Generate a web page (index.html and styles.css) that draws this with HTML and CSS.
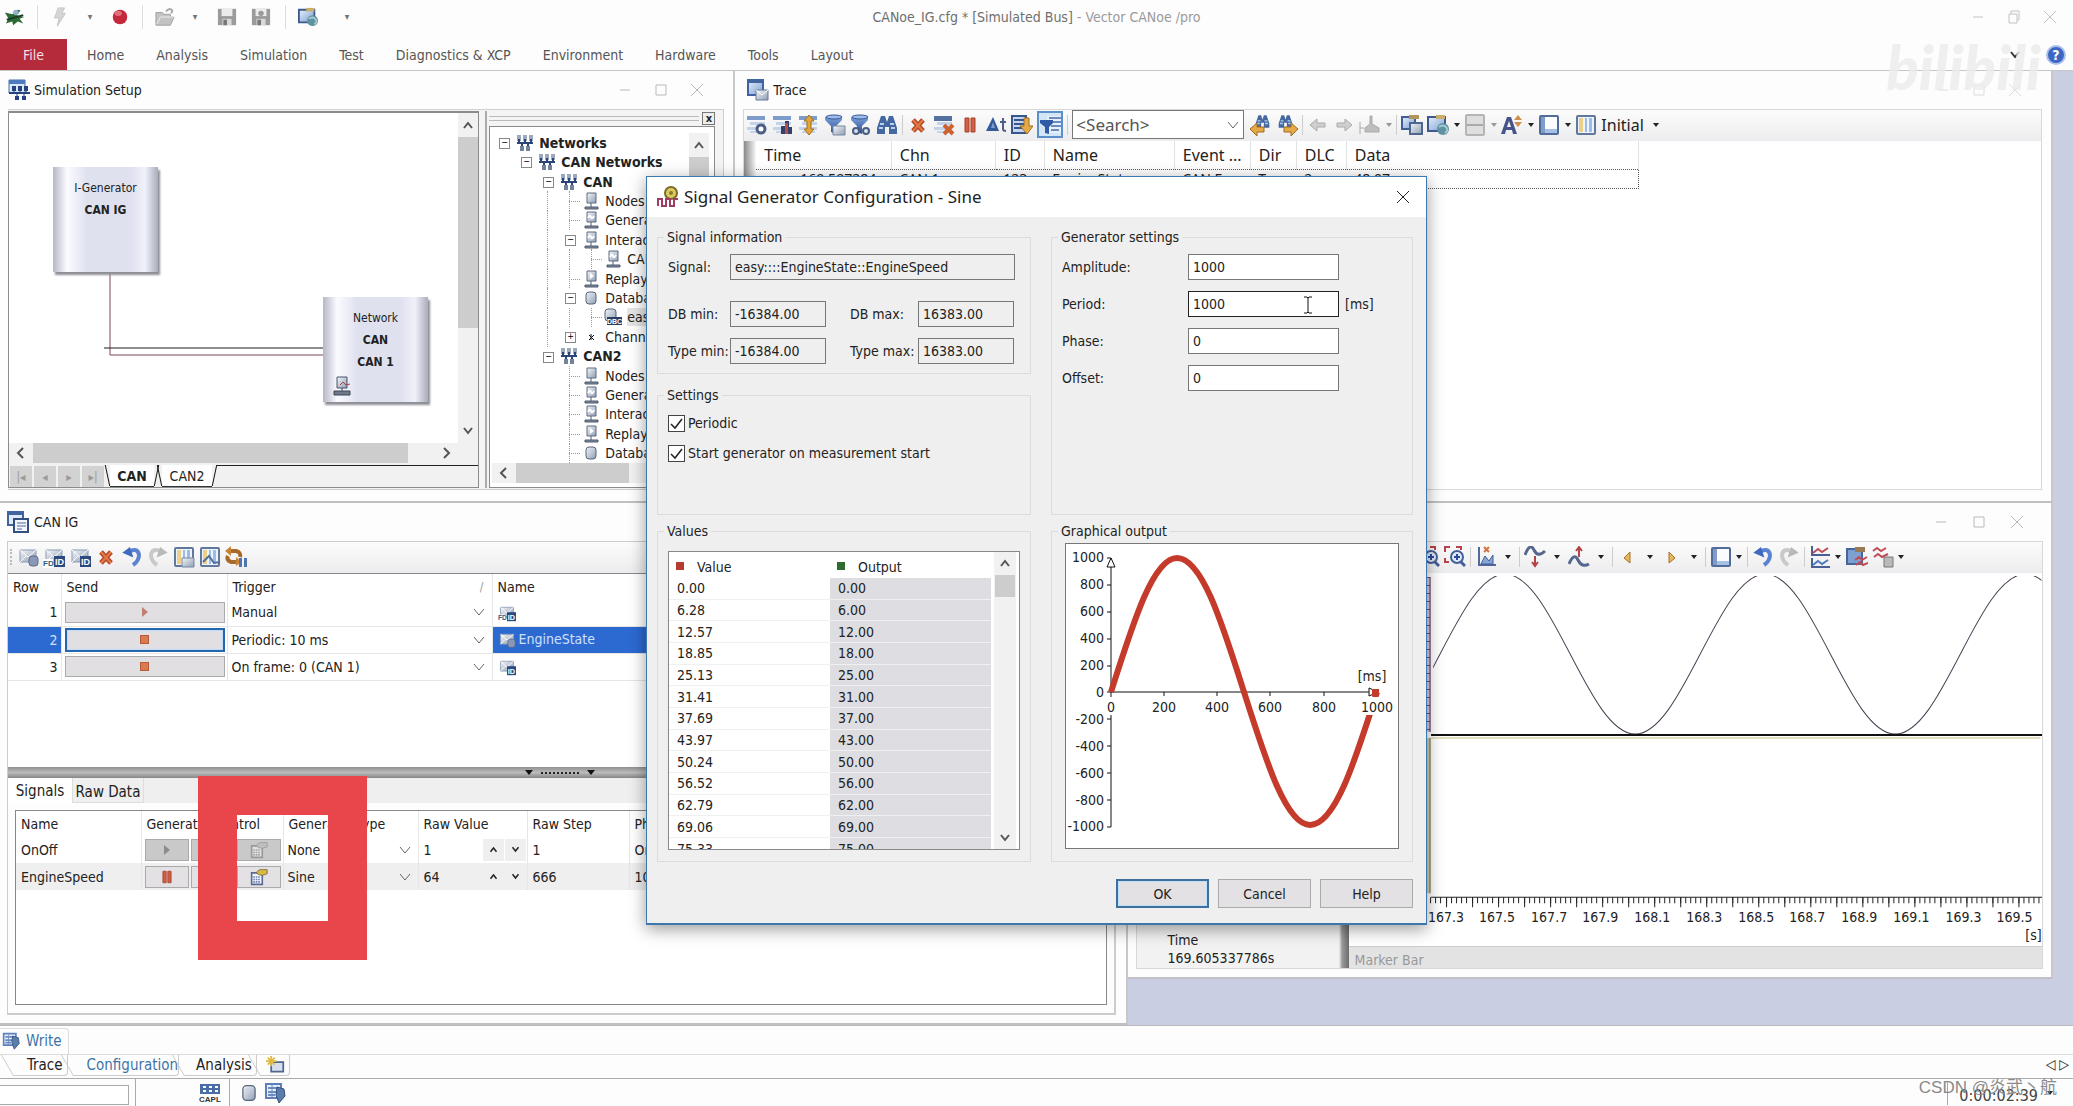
FILE: index.html
```html
<!DOCTYPE html>
<html lang="en">
<head>
<meta charset="utf-8">
<title>CANoe_IG.cfg * [Simulated Bus] - Vector CANoe /pro</title>
<link rel="stylesheet" href="styles.css">
</head>
<body>
<svg class="sprite" aria-hidden="true">
  <defs>
    <linearGradient id="g-blue" x1="0" y1="0" x2="1" y2="1"><stop offset="0" stop-color="#e4eefb"/><stop offset="1" stop-color="#7d9fd3"/></linearGradient>
    <linearGradient id="g-grey" x1="0" y1="0" x2="1" y2="1"><stop offset="0" stop-color="#f4f6f9"/><stop offset="1" stop-color="#8e9db2"/></linearGradient>
    <linearGradient id="g-navy" x1="0" y1="0" x2="0" y2="1"><stop offset="0" stop-color="#7da0d8"/><stop offset="1" stop-color="#274c94"/></linearGradient>
  </defs>
  <symbol id="i-logo" viewBox="0 0 24 20"><path d="M1 5l8 2 6-5 3 1-4 5 8 2-5 2 4 5-6-2-5 4-1-4-7 2 3-5z" fill="#2c6b35"/><path d="M3 13l18-5" stroke="#1d3d28" stroke-width="2"/><circle cx="13" cy="5" r="3" fill="#8fb2c4"/></symbol>
  <symbol id="i-bolt" viewBox="0 0 22 22"><path d="M9 1h7l-3 6h4L8 21l2-9H5z" fill="#d6d6d6" stroke="#c2c2c2"/></symbol>
  <symbol id="i-rec" viewBox="0 0 22 22"><circle cx="11" cy="11" r="8" fill="#c4283c"/><ellipse cx="9" cy="7" rx="4" ry="3" fill="#e0707c"/></symbol>
  <symbol id="i-open" viewBox="0 0 22 22"><path d="M1 6h7l2 2h7v3h4l-4 9H1z" fill="#c3c3c3" stroke="#9d9d9d"/><path d="M2 19l4-8h15" fill="none" stroke="#f2f2f2"/><path d="M12 5q4-5 7-1l-1 3" fill="none" stroke="#a5a5a5" stroke-width="2"/></symbol>
  <symbol id="i-save" viewBox="0 0 22 22"><path d="M1 2h20v18H1z" fill="#9b9b9b"/><path d="M5 2h12v8H5z" fill="#ececec"/><path d="M6 13h10v7H6z" fill="#d9d9d9"/><path d="M7 14h4v6H7z" fill="#777"/></symbol>
  <symbol id="i-saveas" viewBox="0 0 22 22"><path d="M1 2h20v18H1z" fill="#9b9b9b"/><path d="M5 2h12v8H5z" fill="#ececec"/><circle cx="11" cy="7" r="3" fill="#999"/><path d="M6 13h10v7H6z" fill="#d9d9d9"/><path d="M7 14h4v6H7z" fill="#777"/></symbol>
  <symbol id="i-world" viewBox="0 0 22 22"><path d="M1 3h17v14H1z" fill="url(#g-blue)" stroke="#3e5a8c" stroke-width="2"/><path d="M9 1h9v4H9z" fill="#c9ae6c"/><circle cx="16" cy="15" r="6" fill="#5f93a0"/><path d="M12 13q4-3 7 0t-1 6" fill="none" stroke="#a7cad1" stroke-width="2"/></symbol>
  <symbol id="i-simwin" viewBox="0 0 22 22"><path d="M1 1h16v13H1z" fill="#d9e7f8" stroke="#4a6ea8"/><path d="M1 1h16v4H1z" fill="#4f79bd"/><g fill="#27427d"><path d="M4 7h4v5H4zM10 7h4v5h-4zM16 7h4v5h-4zM1 13h21v2H1zM7 17h4v4H7zM14 17h4v4h-4z"/><path d="M6 12v2M12 12v2M18 12v2M9 15v2M16 15v2" stroke="#27427d"/></g></symbol>
  <symbol id="i-tracewin" viewBox="0 0 22 22"><path d="M1 1h15v15H1z" fill="url(#g-blue)" stroke="#3f64a0" stroke-width="2"/><path d="M1 1h15v3H1z" fill="#3f64a0"/><path d="M9 11h12v10H9z" fill="url(#g-grey)" stroke="#65799b"/><path d="M9 11l6 5 6-5" fill="none" stroke="#fff"/></symbol>
  <symbol id="i-igwin" viewBox="0 0 22 22"><path d="M1 1h15v13H1z" fill="#dfeaf9" stroke="#3f64a0" stroke-width="2"/><path d="M1 1h15v3H1z" fill="#3f64a0"/><path d="M7 8h14v13H7z" fill="#f3f7fd" stroke="#334f80" stroke-width="2"/><path d="M10 12h9M10 15h9M10 18h5" stroke="#4c68a0"/></symbol>
  <symbol id="i-net" viewBox="0 0 18 18"><path d="M1 1h4v6H1zM7 1h4v6H7zM13 1h4v6h-4z" fill="#9ba9bd"/><path d="M1 8h16v2H1z" fill="#2b4578"/><path d="M3 5v4M9 5v4M15 5v4M6 9v4M12 9v4" stroke="#2b4578" stroke-width="2"/><path d="M4 12h4v5H4zM10 12h4v5h-4z" fill="#73839c"/></symbol>
  <symbol id="i-node" viewBox="0 0 16 18"><path d="M4 1h9v10H4z" fill="url(#g-grey)" stroke="#5c6b82"/><path d="M8 11v4M2 15h13v2H2z" stroke="#4f5c70" fill="#7f8a9a"/></symbol>
  <symbol id="i-wave" viewBox="0 0 16 18"><use href="#i-node"/><path d="M5 7q2-4 3-1t3-1" fill="none" stroke="#fff" stroke-width="2"/></symbol>
  <symbol id="i-play" viewBox="0 0 16 18"><use href="#i-node"/><path d="M7 3l4 3-4 3z" fill="#fff"/></symbol>
  <symbol id="i-db" viewBox="0 0 16 18"><rect x="3" y="3" width="10" height="12" rx="3" fill="url(#g-grey)" stroke="#56637c"/><path d="M5 6h6" stroke="#c8cfe0"/></symbol>
  <symbol id="i-dbc" viewBox="0 0 18 18"><rect x="1" y="1" width="11" height="12" rx="3" fill="url(#g-grey)" stroke="#56637c"/><path d="M3 9h15v8H3z" fill="#2c3d63"/><text x="3" y="16" font-size="7" font-weight="700" font-family="Liberation Sans" fill="#fff">DBC</text></symbol>
  <symbol id="i-chan" viewBox="0 0 16 18"><path d="M6 7l5 5M11 7l-5 5M8 6v6" stroke="#111" stroke-width="1"/></symbol>
  <symbol id="i-probe" viewBox="0 0 18 20"><path d="M4 1h10v11H4z" fill="url(#g-grey)" stroke="#45536a"/><path d="M9 12v3M1 15h16v4H1z" stroke="#3c4758" fill="#6d7988"/><path d="M7 9l3-3 3 3 4-1" stroke="#b03a4a" fill="none"/></symbol>
  <symbol id="i-envbase" viewBox="0 0 22 22"><path d="M3 4h16v12H3z" fill="url(#g-grey)" stroke="#8b9bb5"/><path d="M3 4l8 7 8-7M3 16l6-6M19 16l-6-6" fill="none" stroke="#fff"/></symbol>
  <symbol id="i-env" viewBox="0 0 22 22"><use href="#i-envbase"/><rect x="12" y="10" width="9" height="10" rx="3" fill="#8b98b5" stroke="#5c6b8c"/></symbol>
  <symbol id="i-envid" viewBox="0 0 22 22"><use href="#i-envbase"/><path d="M11 10h11v11H11z" fill="#2d4a80"/><text x="12" y="19" font-size="9" font-weight="700" font-family="Liberation Sans" fill="#fff">ID</text></symbol>
  <symbol id="i-envfd" viewBox="0 0 22 22"><use href="#i-envid"/><path d="M0 13h10v9H0z" fill="#fff"/><text x="0" y="20" font-size="8" font-weight="700" font-family="Liberation Sans" fill="#2a6080">FD</text></symbol>
  <symbol id="i-x" viewBox="0 0 22 22"><path d="M6 6l10 11M16 6L6 17" stroke="#b8492a" stroke-width="5"/><path d="M6 6l10 11M16 6L6 17" stroke="#e07a45" stroke-width="2"/></symbol>
  <symbol id="i-undo" viewBox="0 0 22 22"><path d="M7 6Q17 1 18 9q0 6-6 10" fill="none" stroke="#5b83cf" stroke-width="4"/><path d="M2 5l9-3v11z" fill="#3f6ac0" transform="rotate(-18 7 8)"/></symbol>
  <symbol id="i-redo" viewBox="0 0 22 22"><path d="M15 6Q5 1 4 9q0 6 6 10" fill="none" stroke="#c9c9c9" stroke-width="4"/><path d="M20 5l-9-3v11z" fill="#b9b9b9" transform="rotate(18 15 8)"/></symbol>
  <symbol id="i-cols" viewBox="0 0 22 22"><rect x="2" y="2" width="18" height="18" rx="1" fill="#eef4fc" stroke="#61789c" stroke-width="2"/><path d="M4 4h4v14H4z" fill="#ecd089"/><path d="M10 4h2v14h-2zM14 4h3v14h-3z" fill="#9dbbe6"/></symbol>
  <symbol id="i-colsenv" viewBox="0 0 22 22"><use href="#i-cols"/><path d="M9 12h12v9H9z" fill="url(#g-grey)" stroke="#7787a2"/></symbol>
  <symbol id="i-colswave" viewBox="0 0 22 22"><use href="#i-cols"/><path d="M4 16l6-6 5 7 6-1" fill="none" stroke="#4f6f9e" stroke-width="2"/></symbol>
  <symbol id="i-loop" viewBox="0 0 22 22"><path d="M4 5h7q5 1 4 6M13 16H6q-5-2-3-6" fill="none" stroke="#a86a2a" stroke-width="4"/><path d="M6 0v10L0 5zM11 11v9l6-4z" fill="#c98537"/><path d="M14 12h3v9h-3zM19 12h3v9h-3z" fill="#4f76b4"/></symbol>
  <symbol id="i-list" viewBox="0 0 22 22"><path d="M1 2h18v4H1z" fill="#7d9ccb"/><path d="M4 8h15v3H4zM1 13h18v3H1zM4 17h13v2H4z" fill="#c3d3ea"/></symbol>
  <symbol id="i-listmag" viewBox="0 0 22 22"><use href="#i-list"/><circle cx="15" cy="15" r="4" fill="#fff" stroke="#4c5f84" stroke-width="3"/></symbol>
  <symbol id="i-listbar" viewBox="0 0 22 22"><use href="#i-list"/><path d="M9 20v-8h4V7h4v6h3v7z" fill="#34426b"/><path d="M13 9h3v11h-3z" fill="#b2514a"/></symbol>
  <symbol id="i-listud" viewBox="0 0 22 22"><use href="#i-list"/><path d="M11 1l5 6h-3v8h3l-5 6-5-6h3V7H6z" fill="#e3a43a" stroke="#a06f20"/></symbol>
  <symbol id="i-funnel" viewBox="0 0 22 22"><path d="M1 3h17v3l-6 6v8l-5-2v-6L1 6z" fill="url(#g-navy)"/><ellipse cx="10" cy="3" rx="8" ry="2" fill="#9fbbe6" stroke="#34599c"/></symbol>
  <symbol id="i-funnelenv" viewBox="0 0 22 22"><use href="#i-funnel"/><path d="M9 12h12v9H9z" fill="url(#g-grey)" stroke="#7787a2"/></symbol>
  <symbol id="i-funnelbin" viewBox="0 0 22 22"><use href="#i-funnel"/><circle cx="6" cy="17" r="3" fill="#d7e0ee" stroke="#4a5c80" stroke-width="2"/><circle cx="16" cy="17" r="3" fill="#d7e0ee" stroke="#4a5c80" stroke-width="2"/></symbol>
  <symbol id="i-binoc" viewBox="0 0 22 22"><path d="M5 2h4l2 6 2-6h4l4 12v6h-8v-7h-4v7H1v-6z" fill="#44689f"/><path d="M4 10h4M14 10h4M3 14h4M15 14h4" stroke="#b9d0f0" stroke-width="2"/></symbol>
  <symbol id="i-listx" viewBox="0 0 22 22"><use href="#i-list"/><path d="M1 2h18v5H1z" fill="#55719f"/><path d="M11 11l9 9M20 11l-9 9" stroke="#d0622f" stroke-width="4"/></symbol>
  <symbol id="i-pause" viewBox="0 0 22 22"><path d="M6 4h4v14H6zM12 4h4v14h-4z" fill="#cf6045" stroke="#a83f2b"/></symbol>
  <symbol id="i-delta" viewBox="0 0 22 22"><path d="M8 3l6 14H1z" fill="#345a9b"/><path d="M8 8l2 6H6z" fill="#7d9dd0"/><path d="M18 4v11q0 2 3 2M15 8h6" stroke="#4c5f84" stroke-width="2" fill="none"/></symbol>
  <symbol id="i-listdown" viewBox="0 0 22 22"><path d="M1 2h14v17H1z" fill="#c5d6ee" stroke="#39568c" stroke-width="2"/><path d="M3 6h10M3 10h10M3 14h10" stroke="#39568c" stroke-width="2"/><path d="M13 4h5v8h4l-6 8-7-8h4z" fill="#e5aa45" stroke="#9d6c20"/></symbol>
  <symbol id="i-funnellist" viewBox="0 0 22 22"><path d="M8 2h14v17H8z" fill="#e7effa"/><path d="M10 4h12M12 8h10M12 12h10M12 16h8" stroke="#6c8bbf" stroke-width="2"/><path d="M1 6h13v3l-4 4v7l-4-1v-6L1 9z" fill="#2f5aa5"/></symbol>
  <symbol id="i-binl" viewBox="0 0 22 22"><use href="#i-binoc" x="4" width="17" height="15"/><path d="M0 15l7-6v4h7v5H7v4z" fill="#e5aa45" stroke="#9d6c20"/></symbol>
  <symbol id="i-binr" viewBox="0 0 22 22"><use href="#i-binoc" x="1" width="17" height="15"/><path d="M22 15l-7-6v4H8v5h7v4z" fill="#e5aa45" stroke="#9d6c20"/></symbol>
  <symbol id="i-arl" viewBox="0 0 22 22"><path d="M3 11l7-6v4h8v4h-8v4z" fill="#cfcfcf" stroke="#ababab"/></symbol>
  <symbol id="i-arr" viewBox="0 0 22 22"><path d="M19 11l-7-6v4H4v4h8v4z" fill="#cfcfcf" stroke="#ababab"/></symbol>
  <symbol id="i-mark" viewBox="0 0 22 22"><path d="M1 8v12M1 14h4M6 18v-4l5-4v-8h2v8l7 4v4z" fill="#bdbdbd" stroke="#a9a9a9"/></symbol>
  <symbol id="i-wins" viewBox="0 0 22 22"><path d="M1 3h13v12H1z" fill="url(#g-blue)" stroke="#3f5f96" stroke-width="2"/><path d="M8 1h10v4H8z" fill="#b0955a"/><path d="M9 9h12v11H9z" fill="url(#g-grey)" stroke="#4f678f" stroke-width="2"/></symbol>
  <symbol id="i-grey" viewBox="0 0 22 22"><rect x="2" y="1" width="18" height="20" rx="1" fill="#dedede" stroke="#b5b5b5" stroke-width="2"/><path d="M3 11h16" stroke="#aaa" stroke-width="2"/></symbol>
  <symbol id="i-font" viewBox="0 0 22 22"><path d="M0 20L6 3h4l6 17h-4l-1-4H5l-1 4zM6 13h4L8 7z" fill="#46548a" fill-rule="evenodd"/><path d="M17 1l4 5h-8zM17 13l4-5h-8z" fill="#cf8f4a"/></symbol>
  <symbol id="i-panel" viewBox="0 0 22 22"><rect x="2" y="2" width="18" height="18" rx="1" fill="#fafcff" stroke="#526c99" stroke-width="2"/><path d="M3 3h4v16H3z" fill="#7f9ccb"/><path d="M7 15h12v4H7z" fill="#a6c0e6"/></symbol>
  <symbol id="i-zoom" viewBox="0 0 22 22"><path d="M1 6V1h5M12 1h5v3M1 12v4h4" fill="none" stroke="#b8434f" stroke-width="2"/><circle cx="13" cy="11" r="6" fill="#dfe8f8" stroke="#44609a" stroke-width="2"/><path d="M13 8v6M10 11h6" stroke="#2c4aa0" stroke-width="2"/><path d="M17 16l4 4" stroke="#44609a" stroke-width="3"/></symbol>
  <symbol id="i-axis" viewBox="0 0 22 22"><path d="M4 1v18h17" fill="none" stroke="#54689a" stroke-width="2"/><path d="M6 18l4-8 4 5 4-6v9z" fill="#88a7d6" stroke="#3f5f96"/><path d="M9 1l5 5M14 1L9 6" stroke="#d4743f" stroke-width="2"/></symbol>
  <symbol id="i-wdown" viewBox="0 0 22 22"><path d="M1 9q5-13 9-5t11 1" fill="none" stroke="#56678f" stroke-width="3"/><path d="M11 10v10M8 16l3 4 3-4" fill="none" stroke="#b3434a" stroke-width="2"/></symbol>
  <symbol id="i-wup" viewBox="0 0 22 22"><path d="M1 18q5-12 9-4t11 4" fill="none" stroke="#56678f" stroke-width="3"/><path d="M11 11V1M8 5l3-4 3 4" fill="none" stroke="#b3434a" stroke-width="2"/></symbol>
  <symbol id="i-tril" viewBox="0 0 22 22"><path d="M13 6v11l-6-5z" fill="#e8b75a" stroke="#a5702b"/></symbol>
  <symbol id="i-trir" viewBox="0 0 22 22"><path d="M8 6v11l6-5z" fill="#e8b75a" stroke="#a5702b"/></symbol>
  <symbol id="i-graphs" viewBox="0 0 22 22"><path d="M3 0v9h18M3 12v9h18" fill="none" stroke="#4a5f96" stroke-width="2"/><path d="M4 7l5-4 4 3 6-4" fill="none" stroke="#c04b55" stroke-width="2"/><path d="M4 19l5-4 4 3 6-4" fill="none" stroke="#4d79bf" stroke-width="2"/></symbol>
  <symbol id="i-gwin" viewBox="0 0 22 22"><path d="M1 3h15v15H1z" fill="#7e9fd2" stroke="#48659b" stroke-width="2"/><path d="M9 1h10v5H9z" fill="#9a7a54"/><path d="M9 14l4-3 3 3 5-3M10 19l4-3 3 3 5-2" fill="none" stroke="#c04b55" stroke-width="2"/></symbol>
  <symbol id="i-waves" viewBox="0 0 22 22"><path d="M1 5l4-3 4 3 5-3M2 11l4-3 4 3 6-3" fill="none" stroke="#c04b55" stroke-width="2"/><path d="M12 11h9v10h-9z" fill="#b9b9b9" stroke="#777"/></symbol>
  <symbol id="i-write" viewBox="0 0 22 22"><path d="M2 2h15v14H2z" fill="#e6eefa" stroke="#5f7fb8" stroke-width="2"/><path d="M4 6h11M4 10h9M4 13h7" stroke="#6d8cc4" stroke-width="2"/><path d="M8 3v12" stroke="#6d8cc4"/><path d="M13 5l7 2 1 7-6 7-3-8z" fill="#5a7dab" stroke="#33507c"/></symbol>
  <symbol id="i-capl" viewBox="0 0 22 20"><path d="M1 1h20v10H1z" fill="#4a6ea5"/><path d="M4 4h3M10 4h3M16 4h3M4 8h3M10 8h3M16 8h3" stroke="#fff" stroke-width="2"/><text x="0" y="19" font-size="8" font-weight="700" font-family="Liberation Sans" fill="#333">CAPL</text></symbol>
  <symbol id="i-new" viewBox="0 0 22 22"><path d="M6 7h14v11H6z" fill="#d5dff0" stroke="#4f678f" stroke-width="2"/><path d="M6 0v12M0 6h12M2 2l8 8M10 2l-8 8" stroke="#e3b93d" stroke-width="2"/></symbol>
  <symbol id="i-siggen" viewBox="0 0 22 22"><circle cx="14" cy="7" r="6" fill="#dccb5e" stroke="#7b6b26" stroke-width="2"/><circle cx="14" cy="7" r="2" fill="#8b7a30"/><path d="M1 20v-7h4v7h4v-7h4v7h4v-7h4" fill="none" stroke="#a03c62" stroke-width="2"/></symbol>
  <symbol id="i-prop" viewBox="0 0 22 22"><path d="M2 6h13v14H2z" fill="#f4f6fb" stroke="#5a6a94" stroke-width="2"/><path d="M4 11h9M4 14h9M4 17h9" stroke="#6d82b5" stroke-width="2" stroke-dasharray="2 1"/><path d="M8 5q3-4 7-3h6v5l-6 2-5-1z" fill="#d9b945" stroke="#7b672b"/></symbol>
  <symbol id="w-min" viewBox="0 0 14 14"><path d="M2 7h10" stroke="currentColor" fill="none"/></symbol>
  <symbol id="w-max" viewBox="0 0 14 14"><path d="M2 2h10v10H2z" stroke="currentColor" fill="none"/></symbol>
  <symbol id="w-res" viewBox="0 0 14 14"><path d="M2 4h8v9H2zM4 4V1h8v9h-2" stroke="currentColor" fill="none"/></symbol>
  <symbol id="w-x" viewBox="0 0 14 14"><path d="M1 1l12 12M13 1L1 13" stroke="currentColor" fill="none"/></symbol>
  <symbol id="c-up" viewBox="0 0 12 12"><path d="M2 9l4-5 4 5" fill="none" stroke="currentColor" stroke-width="2"/></symbol>
  <symbol id="c-down" viewBox="0 0 12 12"><path d="M2 3l4 5 4-5" fill="none" stroke="currentColor" stroke-width="2"/></symbol>
  <symbol id="c-left" viewBox="0 0 12 12"><path d="M9 1L4 6l5 5" fill="none" stroke="currentColor" stroke-width="2"/></symbol>
  <symbol id="c-right" viewBox="0 0 12 12"><path d="M3 1l5 5-5 5" fill="none" stroke="currentColor" stroke-width="2"/></symbol>
</svg>

<header>
  <div class="titlebar">
    <div class="quick">
      <svg class="q"><use href="#i-logo"/></svg><i class="qsep"></i>
      <svg class="q"><use href="#i-bolt"/></svg><i class="qcaret">▾</i>
      <svg class="q"><use href="#i-rec"/></svg><i class="qsep"></i>
      <svg class="q"><use href="#i-open"/></svg><i class="qcaret">▾</i>
      <svg class="q wide"><use href="#i-save"/></svg>
      <svg class="q wide"><use href="#i-saveas"/></svg><i class="qsep"></i>
      <svg class="q"><use href="#i-world"/></svg><i class="qcaret last">▾</i>
    </div>
    <h1>CANoe_IG.cfg * [Simulated Bus] <span>- Vector CANoe /pro</span></h1>
    <div class="winctl main"><svg><use href="#w-min"/></svg><svg><use href="#w-res"/></svg><svg><use href="#w-x"/></svg></div>
  </div>
  <nav class="menu">
    <a class="file" href="#file">File</a>
    <a href="#home">Home</a><a href="#analysis">Analysis</a><a href="#simulation">Simulation</a><a href="#test">Test</a><a href="#diag">Diagnostics &amp; XCP</a><a href="#env">Environment</a><a href="#hw">Hardware</a><a href="#tools">Tools</a><a href="#layout">Layout</a>
    <svg class="ribbon-toggle"><use href="#c-down"/></svg>
    <button class="help" aria-label="Help">?</button>
  </nav>
</header>

<main class="mdi">
  <div class="mdirow top">
    <section class="win">
      <div class="wintitle"><svg class="ic"><use href="#i-simwin"/></svg><h2>Simulation Setup</h2><div class="winctl"><svg><use href="#w-min"/></svg><svg><use href="#w-max"/></svg><svg><use href="#w-x"/></svg></div></div>
      <div class="simbody">
        <div class="canvaspane">
          <div class="canvas">
            <svg class="wires" width="440" height="320"><path d="M101 160v82M101 242h213" fill="none" stroke="#7a4560"/><path d="M95 235h219" stroke="#1c1c24"/></svg>
            <div class="block gen"><span>I-Generator</span><b>CAN IG</b></div>
            <div class="block netw"><span>Network</span><b>CAN</b><b>CAN 1</b><svg><use href="#i-probe"/></svg></div>
          </div>
          <div class="vsb"><svg><use href="#c-up"/></svg><i></i><svg><use href="#c-down"/></svg></div>
          <div class="hsb"><svg><use href="#c-left"/></svg><i></i><svg><use href="#c-right"/></svg></div>
          <div class="sheets">
            <button class="nav">|◂</button><button class="nav">◂</button><button class="nav">▸</button><button class="nav">▸|</button>
            <button class="sheet on">CAN</button><button class="sheet">CAN2</button><i class="rest"></i>
          </div>
        </div>
        <div class="treepane">
          <div class="grip"><i></i><button aria-label="Close">x</button></div>
          <div class="treebox">
            <ul class="tree">
              <li><i class="e"></i><svg><use href="#i-net"/></svg><b>Networks</b></li>
              <li><i></i><i class="e"></i><svg><use href="#i-net"/></svg><b>CAN Networks</b></li>
              <li><i></i><i></i><i class="e"></i><svg><use href="#i-net"/></svg><b>CAN</b></li>
              <li><i></i><i></i><i class="v"></i><i class="l"></i><svg><use href="#i-node"/></svg><span>Nodes</span></li>
              <li><i></i><i></i><i class="v"></i><i class="l"></i><svg><use href="#i-wave"/></svg><span>Generators</span></li>
              <li><i></i><i></i><i class="v"></i><i class="e"></i><svg><use href="#i-wave"/></svg><span>Interactive Generators</span></li>
              <li><i></i><i></i><i class="v"></i><i class="v"></i><i class="l"></i><svg><use href="#i-wave"/></svg><span>CAN IG</span></li>
              <li><i></i><i></i><i class="v"></i><i class="l"></i><svg><use href="#i-play"/></svg><span>Replay blocks</span></li>
              <li><i></i><i></i><i class="v"></i><i class="e"></i><svg><use href="#i-db"/></svg><span>Databases</span></li>
              <li><i></i><i></i><i class="v"></i><i class="v"></i><i class="l"></i><svg><use href="#i-dbc"/></svg><span class="sel">easy</span></li>
              <li><i></i><i></i><i class="v"></i><i class="e plus"></i><svg><use href="#i-chan"/></svg><span>Channels</span></li>
              <li><i></i><i></i><i class="e"></i><svg><use href="#i-net"/></svg><b>CAN2</b></li>
              <li><i></i><i></i><i></i><i class="l"></i><svg><use href="#i-node"/></svg><span>Nodes</span></li>
              <li><i></i><i></i><i></i><i class="l"></i><svg><use href="#i-wave"/></svg><span>Generators</span></li>
              <li><i></i><i></i><i></i><i class="l"></i><svg><use href="#i-wave"/></svg><span>Interactive Generators</span></li>
              <li><i></i><i></i><i></i><i class="l"></i><svg><use href="#i-play"/></svg><span>Replay blocks</span></li>
              <li><i></i><i></i><i></i><i class="l"></i><svg><use href="#i-db"/></svg><span>Databases</span></li>
            </ul>
            <div class="vsb"><svg><use href="#c-up"/></svg><i></i><svg><use href="#c-down"/></svg></div>
            <div class="hsb"><svg><use href="#c-left"/></svg><i></i><svg><use href="#c-right"/></svg></div>
          </div>
        </div>
      </div>
    </section>

    <section class="win tracewin">
      <div class="wintitle"><svg class="ic"><use href="#i-tracewin"/></svg><h2>Trace</h2><div class="winctl faint"><svg><use href="#w-min"/></svg><svg><use href="#w-max"/></svg><svg><use href="#w-x"/></svg></div></div>
      <div class="winbody">
        <div class="toolbar">
          <svg class="ic"><use href="#i-listmag"/></svg><svg class="ic"><use href="#i-listbar"/></svg><svg class="ic"><use href="#i-listud"/></svg><svg class="ic"><use href="#i-funnelenv"/></svg><svg class="ic"><use href="#i-funnelbin"/></svg><svg class="ic"><use href="#i-binoc"/></svg><i class="sep"></i>
          <svg class="ic"><use href="#i-x"/></svg><svg class="ic"><use href="#i-listx"/></svg><svg class="ic"><use href="#i-pause"/></svg><svg class="ic"><use href="#i-delta"/></svg><svg class="ic"><use href="#i-listdown"/></svg><button class="pressed" aria-label="Filter"><svg class="ic"><use href="#i-funnellist"/></svg></button><i class="sep"></i>
          <select class="search" aria-label="Search"><option>&lt;Search&gt;</option></select>
          <svg class="ic"><use href="#i-binl"/></svg><svg class="ic"><use href="#i-binr"/></svg><i class="sep"></i>
          <svg class="ic"><use href="#i-arl"/></svg><svg class="ic"><use href="#i-arr"/></svg><svg class="ic"><use href="#i-mark"/></svg><i class="caret off"></i><i class="sep"></i>
          <svg class="ic"><use href="#i-wins"/></svg><svg class="ic"><use href="#i-world"/></svg><i class="caret"></i><svg class="ic"><use href="#i-grey"/></svg><i class="caret off"></i><svg class="ic"><use href="#i-font"/></svg><i class="caret"></i><svg class="ic"><use href="#i-panel"/></svg><i class="caret"></i><svg class="ic"><use href="#i-cols"/></svg><span class="initial">Initial</span><i class="caret gapl"></i>
        </div>
        <div class="tracegrid">
          <table>
            <colgroup><col class="t1"><col class="t2"><col class="t3"><col class="t4"><col class="t5"><col class="t6"><col class="t7"><col class="t8"></colgroup>
            <thead><tr><th>Time</th><th>Chn</th><th>ID</th><th>Name</th><th>Event ...</th><th>Dir</th><th>DLC</th><th>Data</th></tr></thead>
            <tbody><tr><td>169.597284</td><td>CAN 1</td><td>123</td><td>EngineState</td><td>CAN Frame</td><td>Tx</td><td>2</td><td>48 07</td></tr></tbody>
          </table>
        </div>
      </div>
    </section>
  </div>

  <div class="mdirow bottom">
    <section class="win igwin">
      <div class="wintitle"><svg class="ic"><use href="#i-igwin"/></svg><h2>CAN IG</h2></div>
      <div class="igbody">
        <div class="toolbar"><i class="dots"></i>
          <svg class="ic"><use href="#i-env"/></svg><svg class="ic"><use href="#i-envfd"/></svg><svg class="ic"><use href="#i-envid"/></svg><svg class="ic"><use href="#i-x"/></svg><svg class="ic"><use href="#i-undo"/></svg><svg class="ic"><use href="#i-redo"/></svg><svg class="ic"><use href="#i-colsenv"/></svg><svg class="ic"><use href="#i-colswave"/></svg><svg class="ic"><use href="#i-loop"/></svg>
        </div>
        <div class="igtable">
          <table class="grid frames">
            <colgroup><col class="a1"><col class="a2"><col class="a3"><col></colgroup>
            <thead><tr><th>Row</th><th>Send</th><th>Trigger<em>/</em></th><th>Name</th></tr></thead>
            <tbody>
              <tr><td>1</td><td><button class="send" aria-label="Send row 1"><i class="play"></i></button></td><td><select aria-label="Trigger row 1"><option>Manual</option></select></td><td><svg class="mini"><use href="#i-envfd"/></svg></td></tr>
              <tr class="on"><td>2</td><td><button class="send focus" aria-label="Stop row 2"><i class="stop"></i></button></td><td><select aria-label="Trigger row 2"><option>Periodic: 10 ms</option></select></td><td><svg class="mini"><use href="#i-env"/></svg>EngineState</td></tr>
              <tr><td>3</td><td><button class="send" aria-label="Stop row 3"><i class="stop"></i></button></td><td><select aria-label="Trigger row 3"><option>On frame: 0 (CAN 1)</option></select></td><td><svg class="mini"><use href="#i-envid"/></svg></td></tr>
            </tbody>
          </table>
        </div>
        <div class="splitter"><i class="tri"></i><i class="sdots"></i><i class="tri"></i></div>
        <div class="tabstrip"><button class="on">Signals</button><button>Raw Data</button></div>
        <div class="sigpanel">
          <table class="grid signals">
            <colgroup><col class="b1"><col class="b2"><col class="b3"><col class="b4"><col class="b5"><col></colgroup>
            <thead><tr><th>Name</th><th>Generator Control</th><th>Generator Type</th><th>Raw Value</th><th>Raw Step</th><th>Phys Value</th></tr></thead>
            <tbody>
              <tr><td>OnOff</td><td><div class="ctl off"><button aria-label="Start"><i class="play"></i></button><button aria-label="Stop"></button><button aria-label="Define"><svg class="mini"><use href="#i-prop"/></svg></button></div></td><td><select aria-label="OnOff type"><option>None</option></select></td><td><div class="spin"><span>1</span><button aria-label="Up"><svg><use href="#c-up"/></svg></button><button aria-label="Down"><svg><use href="#c-down"/></svg></button></div></td><td>1</td><td>On</td></tr>
              <tr class="alt"><td>EngineSpeed</td><td><div class="ctl"><button aria-label="Pause"><svg class="mini"><use href="#i-pause"/></svg></button><button aria-label="Stop"></button><button aria-label="Define"><svg class="mini"><use href="#i-prop"/></svg></button></div></td><td><select aria-label="EngineSpeed type"><option>Sine</option></select></td><td><div class="spin"><span>64</span><button aria-label="Up"><svg><use href="#c-up"/></svg></button><button aria-label="Down"><svg><use href="#c-down"/></svg></button></div></td><td>666</td><td>1000</td></tr>
            </tbody>
          </table>
        </div>
      </div>
    </section>

    <section class="win graphwin">
      <div class="wintitle"><div class="winctl"><svg><use href="#w-min"/></svg><svg><use href="#w-max"/></svg><svg><use href="#w-x"/></svg></div></div>
      <div class="winbody">
        <div class="toolbar right">
          <svg class="ic"><use href="#i-zoom"/></svg><svg class="ic"><use href="#i-zoom"/></svg><i class="sep"></i>
          <svg class="ic"><use href="#i-axis"/></svg><i class="caret roomy"></i><i class="sep"></i>
          <svg class="ic"><use href="#i-wdown"/></svg><i class="caret roomy"></i><svg class="ic"><use href="#i-wup"/></svg><i class="caret roomy"></i><i class="sep"></i>
          <svg class="ic"><use href="#i-tril"/></svg><i class="caret roomy"></i><svg class="ic"><use href="#i-trir"/></svg><i class="caret roomy"></i><i class="sep"></i>
          <svg class="ic"><use href="#i-panel"/></svg><i class="caret"></i><i class="sep"></i>
          <svg class="ic"><use href="#i-undo"/></svg><svg class="ic"><use href="#i-redo"/></svg><i class="sep"></i>
          <svg class="ic"><use href="#i-graphs"/></svg><i class="caret"></i><svg class="ic"><use href="#i-gwin"/></svg><svg class="ic"><use href="#i-waves"/></svg><i class="caret"></i>
        </div>
        <div class="graphbody">
          <div class="legend"><hr><span>Time</span><span>169.605337786s</span></div>
          <div class="plot">
            <svg viewBox="0 0 693 374" preserveAspectRatio="xMaxYMin slice">
              <defs><clipPath id="plotclip"><path d="M84 3h608v160H84z"/></clipPath></defs>
              <path d="M77 4h4v155h-4z" fill="#e3c8ea"/><path d="M79 4v155" stroke="#7b4d8a" stroke-width="4" stroke-dasharray="1 7"/><path d="M81 4v155" stroke="#4b2d56"/>
              <path clip-path="url(#plotclip)" d="M26 161C73 161 109 1 156 1S239 161 286 161S369 1 416 1S499 161 546 161S629 1 676 1S759 161 806 161" fill="none" stroke="#4d3f52"/>
              <path d="M82 162h611" stroke="#111" stroke-width="2"/><path d="M82 165h609" stroke="#c9bd7e"/>
              <path d="M77 165h4v155h-4z" fill="#d5d1a8"/><path d="M81 165v155" stroke="#6d693f"/>
              <path d="M82 324h611" stroke="#222"/><path d="M71 327h621" stroke="#222" stroke-width="6" stroke-dasharray="1 4 1 4 1 4 1 4 1 5"/><path d="M71 329h622" stroke="#222" stroke-width="10" stroke-dasharray="1 25"/>
              <g class="ticks" text-anchor="middle"><text x="97" y="349">167.3</text><text x="148" y="349">167.5</text><text x="200" y="349">167.7</text><text x="251" y="349">167.9</text><text x="303" y="349">168.1</text><text x="355" y="349">168.3</text><text x="407" y="349">168.5</text><text x="458" y="349">168.7</text><text x="510" y="349">168.9</text><text x="562" y="349">169.1</text><text x="614" y="349">169.3</text><text x="665" y="349">169.5</text><text x="684" y="367">[s]</text></g>
            </svg>
            <div class="markerbar"><span>Marker Bar</span></div>
          </div>
        </div>
      </div>
    </section>
  </div>
</main>

<footer>
  <div class="writerow"><button><svg><use href="#i-write"/></svg>Write</button></div>
  <div class="desktops"><button>Trace</button><button class="on">Configuration</button><button>Analysis</button><button class="add" aria-label="New desktop"><svg><use href="#i-new"/></svg></button><span class="scrollers">◁ ▷</span></div>
  <div class="status">
    <input type="text" aria-label="Status">
    <i class="ssep"></i><svg class="capl"><use href="#i-capl"/></svg><i class="ssep"></i><svg><use href="#i-db"/></svg><svg><use href="#i-write"/></svg>
    <span class="clock">0:00:02:39</span><i class="caret"></i>
  </div>
</footer>

<div class="mark-frame"></div>

<form class="dialog" role="dialog" aria-labelledby="dlg">
  <div class="dlgtitle"><svg class="ic"><use href="#i-siggen"/></svg><h2 id="dlg">Signal Generator Configuration - Sine</h2><button type="button" aria-label="Close"><svg><use href="#w-x"/></svg></button></div>
  <div class="dlgbody">
    <div class="col">
      <fieldset class="info"><legend>Signal information</legend>
        <div class="sig"><label for="f-sig">Signal:</label><input id="f-sig" readonly value="easy::::EngineState::EngineSpeed"></div>
        <div class="minmax">
          <label for="f-dmin">DB min:</label><input id="f-dmin" readonly value="-16384.00"><label class="second" for="f-dmax">DB max:</label><input id="f-dmax" readonly value="16383.00">
          <label for="f-tmin">Type min:</label><input id="f-tmin" readonly value="-16384.00"><label class="second" for="f-tmax">Type max:</label><input id="f-tmax" readonly value="16383.00">
        </div>
      </fieldset>
      <fieldset class="settings"><legend>Settings</legend>
        <label><input type="checkbox" checked>Periodic</label>
        <label><input type="checkbox" checked>Start generator on measurement start</label>
      </fieldset>
      <fieldset class="values"><legend>Values</legend>
        <div class="valbox">
          <table>
            <thead><tr><th><i class="red"></i>Value</th><th><i class="green"></i>Output</th></tr></thead>
            <tbody>
              <tr><td>0.00</td><td>0.00</td></tr><tr><td>6.28</td><td>6.00</td></tr><tr><td>12.57</td><td>12.00</td></tr><tr><td>18.85</td><td>18.00</td></tr><tr><td>25.13</td><td>25.00</td></tr><tr><td>31.41</td><td>31.00</td></tr><tr><td>37.69</td><td>37.00</td></tr><tr><td>43.97</td><td>43.00</td></tr><tr><td>50.24</td><td>50.00</td></tr><tr><td>56.52</td><td>56.00</td></tr><tr><td>62.79</td><td>62.00</td></tr><tr><td>69.06</td><td>69.00</td></tr><tr><td>75.33</td><td>75.00</td></tr>
            </tbody>
          </table>
          <div class="vsb"><svg><use href="#c-up"/></svg><i></i><svg><use href="#c-down"/></svg></div>
        </div>
      </fieldset>
    </div>
    <div class="col">
      <fieldset class="gen-set"><legend>Generator settings</legend>
        <div><label for="g-a">Amplitude:</label><input id="g-a" value="1000"></div>
        <div><label for="g-p">Period:</label><input id="g-p" class="hot" value="1000"><span>[ms]</span></div>
        <div><label for="g-h">Phase:</label><input id="g-h" value="0"></div>
        <div><label for="g-o">Offset:</label><input id="g-o" value="0"></div>
      </fieldset>
      <fieldset class="graphic"><legend>Graphical output</legend>
        <svg class="chart" viewBox="0 0 332 304">
          <path d="M45 14v269M41 14h4M41 41h4M41 68h4M41 95h4M41 122h4M41 175h4M41 202h4M41 229h4M41 256h4M41 283h4" stroke="#111" fill="none"/>
          <path d="M41 148h264M98 148v4M151 148v4M204 148v4M258 148v4M311 148v4" stroke="#111" fill="none"/>
          <path d="M45 148C67 79 87 14 111 14C136 14 156 79 178 148C200 217 220 281 244 281C269 281 289 217 311 148" fill="none" stroke="#c43a2b" stroke-width="6"/>
          <path d="M30 153h30v18H30zM292 153h36v18h-36z" fill="#fff"/>
          <path d="M45 14l4 9h-8z" fill="#fff" stroke="#111"/><path d="M303 144l9 4-9 4z" fill="#fff" stroke="#111"/><path d="M306 145h7v7h-7z" fill="#c43a2b"/>
          <g text-anchor="end"><text x="38" y="18">1000</text><text x="38" y="45">800</text><text x="38" y="72">600</text><text x="38" y="99">400</text><text x="38" y="126">200</text><text x="38" y="153">0</text><text x="38" y="180">-200</text><text x="38" y="207">-400</text><text x="38" y="234">-600</text><text x="38" y="261">-800</text><text x="38" y="287">-1000</text></g>
          <g text-anchor="middle"><text x="45" y="168">0</text><text x="98" y="168">200</text><text x="151" y="168">400</text><text x="204" y="168">600</text><text x="258" y="168">800</text><text x="311" y="168">1000</text><text x="306" y="137">[ms]</text></g>
        </svg>
      </fieldset>
      <div class="actions"><button type="button" class="ok">OK</button><button type="button">Cancel</button><button type="button">Help</button></div>
    </div>
  </div>
  <svg class="ibeam" viewBox="0 0 10 18"><path d="M1 1h3l1 1 1-1h3M5 2v14M1 17h3l1-1 1 1h3" fill="none" stroke="#111"/></svg>
</form>

<div class="brand">bilibili</div>
<div class="credit">CSDN @炎武丶航</div>
</body>
</html>
```
FILE: styles.css
```css
:root {
  --ui: "DejaVu Sans Condensed", "Noto Sans", sans-serif;
  --wide: "Noto Sans", "Open Sans", sans-serif;
  --desk: #cacee3;
}
* { box-sizing: border-box; }
body {
  margin: 0; min-height: 100vh; display: flex; flex-direction: column;
  background: #fdfdfd; color: #222; font: 14px/18px var(--ui);
  position: relative; overflow: hidden;
}
h1, h2 { margin: 0; font-weight: 400; }
button, input, select { font: inherit; color: inherit; margin: 0; }
button { padding: 0; border: 0; background: none; }
svg { display: block; flex: none; }
table { border-collapse: collapse; table-layout: fixed; }
th { font-weight: 400; text-align: left; }
i, em { font-style: normal; }
.sprite { position: absolute; width: 0; height: 0; }
.ic { width: 22px; height: 22px; }
.mini { width: 18px; height: 18px; }

/* title bar and menu */
.titlebar { height: 39px; display: grid; grid-template-columns: 1fr auto 1fr; align-items: center; padding-bottom: 5px; }
.titlebar h1 { font-size: 14px; color: #6f6f6f; }
.titlebar h1 span { color: #9a9a9a; }
.quick { display: flex; align-items: center; gap: 8px; padding-left: 4px; }
.q { width: 22px; height: 20px; }
.q.wide { width: 26px; }
.qsep { width: 1px; height: 24px; background: #ddd; margin: 0 3px; }
.qcaret { width: 22px; text-align: center; font-size: 10px; color: #777; }
.qcaret.last { width: 40px; }
.winctl { display: flex; gap: 22px; margin-left: auto; color: #b9b9b9; }
.winctl svg { width: 14px; height: 14px; }
.winctl.main { padding-right: 16px; color: #c2c2c2; }
.wintitle .faint { color: #dcdcdc; }
.menu { display: flex; align-items: center; height: 32px; border-bottom: 1px solid #c6c6c8; padding-right: 7px; }
.menu a { color: #555; text-decoration: none; padding: 0 16px; }
.menu .file { align-self: stretch; display: flex; align-items: center; justify-content: center; width: 67px; margin-right: 4px; background: #b62b3b; color: #f7dfe2; }
.ribbon-toggle { width: 12px; height: 12px; margin-left: auto; color: #333; }
.help { width: 20px; height: 20px; border-radius: 50%; margin-left: 25px; background: #3d66c4; border: 2px solid #a9c0ea; color: #fff; font-weight: 700; line-height: 14px; }

/* desktop */
.mdi { flex: 1 1 0px; display: grid; grid-template-rows: minmax(0, 432fr) minmax(0, 522fr); background: var(--desk); padding-right: 20px; min-height: 0; }
.mdirow { display: grid; grid-template-rows: minmax(0, 1fr); min-height: 0; }
.mdirow.top { grid-template-columns: 735fr 1317fr; }
.mdirow.bottom { grid-template-columns: 1127fr 925fr; }
.win { background: #fdfdfd; border-right: 2px solid #c8c8cc; border-bottom: 2px solid #c0c0c4; display: flex; flex-direction: column; min-width: 0; min-height: 0; padding: 0 9px 11px 8px; overflow: hidden; }
.wintitle { display: flex; align-items: center; height: 38px; gap: 4px; flex: none; }
.wintitle h2 { font-size: 14px; }
.wintitle .winctl { padding-right: 20px; }
.winbody { flex: 1; display: flex; flex-direction: column; min-height: 0; border: 1px solid #d8d8d8; }
.toolbar { height: 31px; flex: none; display: flex; align-items: center; gap: 4px; padding: 0 2px 2px; background: linear-gradient(#fcfcfc, #ececee); overflow: hidden; }
.sep { width: 1px; height: 20px; background: #ccc; }
.caret { width: 7px; display: grid; place-items: center; flex: none; }
.caret::before { content: ""; border: 3px solid transparent; border-top: 4px solid #222; border-bottom: 0; }
.caret.off::before { border-top-color: #999; }
.caret.roomy { width: 14px; }
.caret.gapl { margin-left: 5px; }

/* scroll bars */
.vsb { background: #f1f1f1; display: flex; flex-direction: column; justify-content: space-between; align-items: center; padding: 6px 0; color: #555; width: 20px; }
.hsb { background: #f1f1f1; display: flex; justify-content: space-between; align-items: center; padding: 0 5px; color: #555; height: 20px; }
.vsb svg, .hsb svg { width: 12px; height: 12px; }
.vsb i { width: 20px; background: #cdcdcd; }
.hsb i { height: 20px; background: #cdcdcd; }

/* simulation setup */
.simbody { flex: 1; display: grid; grid-template-columns: 471fr 238fr; grid-template-rows: minmax(0, 1fr); gap: 6px; min-height: 0; border-top: 1px solid #d0d0d0; border-bottom: 1px solid #ccc; border-right: 1px solid #ccc; background: #f4f4f4; padding: 1px 0; }
.canvaspane { display: grid; grid-template-columns: 1fr 20px; grid-template-rows: 1fr 20px 24px; border: 1px solid #8b8b8b; border-top-width: 2px; min-height: 0; }
.canvas { position: relative; background: #fff; overflow: hidden; }
.canvaspane .vsb { grid-row: 1 / 3; grid-column: 2; padding-bottom: 26px; }
.canvaspane .vsb i { height: 191px; margin: 6px 0 auto; }
.canvaspane .hsb { grid-row: 2; grid-column: 1; }
.canvaspane .hsb i { width: 375px; margin: 0 auto 0 7px; }
.wires { position: absolute; left: 0; top: 0; }
.block { position: absolute; width: 105px; height: 105px; display: flex; flex-direction: column; align-items: center; gap: 4px; padding-top: 12px; font-size: 12px; line-height: 18px; background: linear-gradient(90deg, #b4b7c6, #fbfbff 14px, #dfe1ef 34px, #dfe1ef 78px, #f0f1fa 92px, #a9acbb); box-shadow: 2px 3px 2px #8e8f96; }
.block.gen { left: 44px; top: 54px; }
.block.netw { left: 314px; top: 184px; }
.block svg { position: absolute; left: 10px; bottom: 6px; width: 18px; height: 20px; }
.sheets { grid-column: 1 / 3; display: flex; gap: 2px; padding: 2px 0 0 1px; background: #f1f1f1; height: 24px; }
.sheets .nav { width: 22px; height: 21px; margin-top: 1px; background: #d2d2d2; color: #9b9b9b; font-size: 12px; }
.sheet { position: relative; width: 44px; font-size: 14px; border-bottom: 1px solid #333; background: #fff; height: 22px; margin: 0 3px 0 4px; z-index: 1; }
.sheet.on + .sheet { width: 50px; margin-left: 3px; }
.sheet.on { font-weight: 700; }
.sheet::before, .sheet::after { content: ""; position: absolute; top: 0; bottom: 0; left: -3px; border-left: 1px solid #111; transform: skewX(12deg); }
.sheet::after { left: auto; right: -3px; transform: skewX(-12deg); }
.rest { flex: 1; border-top: 1px solid #222; }
.treepane { display: flex; flex-direction: column; min-height: 0; border-left: 2px solid #aaa; padding-left: 2px; padding-right: 8px; }
.grip { display: flex; align-items: center; gap: 3px; height: 15px; flex: none; }
.grip i { flex: 1; height: 5px; border: 1px solid #bbb; border-width: 1px 0; }
.grip button { width: 13px; height: 13px; border: 1px solid #777; line-height: 9px; font-weight: 700; font-size: 11px; background: #eee; }
.treebox { flex: 1; display: grid; grid-template-columns: 1fr 20px; grid-template-rows: minmax(0, 1fr) 20px; border: 1px solid #8b8b8b; background: #fff; min-height: 0; padding: 6px 5px 4px 2px; }
.tree { list-style: none; margin: 0; padding: 0; display: grid; grid-auto-rows: 1fr; min-width: 0; overflow: hidden; }
.tree li { display: flex; align-items: center; white-space: nowrap; min-height: 0; }
.tree li i { width: 22px; align-self: stretch; flex: none; position: relative; }
.tree li svg { width: 18px; height: 18px; margin: 0 5px 0 2px; }
.tree .v::before, .tree .l::before { content: ""; position: absolute; left: 11px; top: 0; bottom: 0; border-left: 1px dotted #999; }
.tree .l::after { content: ""; position: absolute; left: 11px; right: 0; top: 50%; border-top: 1px dotted #999; }
.tree .e::before { content: "−"; position: absolute; left: 7px; top: 5px; width: 9px; height: 9px; border: 1px solid #888; font-size: 9px; line-height: 7px; text-align: center; color: #000; }
.tree .plus::before { content: "+"; }
.tree .sel { background: #e5e5e5; }
.treebox .vsb { grid-column: 2; }
.treebox .vsb i { height: 90px; margin: 6px 0 auto; }
.treebox .hsb { grid-column: 1 / 3; }
.treebox .hsb i { width: 113px; margin: 0 auto 0 7px; }

/* trace */
.tracewin .wintitle { padding-left: 4px; }
.pressed { width: 26px; height: 27px; border: 2px solid #5b8fc9; background: #d3e6f8; display: grid; place-items: center; }
select { appearance: none; border: 0; border-radius: 0; background: url("data:image/svg+xml,%3Csvg xmlns='http://www.w3.org/2000/svg' width='12' height='8'%3E%3Cpath d='M1 1l5 6 5-6' fill='none' stroke='%23666'/%3E%3C/svg%3E") no-repeat right 2px center; }
.search { width: 172px; height: 29px; border: 1px solid #777; background-color: #fff; background-position: right 4px center; color: #555; padding: 0 3px; margin-right: 2px; font: 17px var(--wide); }
.initial { font: 16px/20px var(--wide); }
.tracegrid { flex: 1; padding-left: 12px; background: linear-gradient(90deg, #8a8a8a, #eee 11px, #fff 12px); overflow: hidden; }
.tracegrid table { width: 882px; font: 16px/20px var(--wide); }
.tracegrid th { height: 28px; padding: 0 8px; border-right: 1px solid #e2e2e2; white-space: nowrap; }
.tracegrid td { height: 19px; padding: 0 8px; border: 1px dotted #555; border-width: 1px 0; font-size: 14px; line-height: 18px; white-space: nowrap; overflow: hidden; }
.tracegrid td:first-child { padding-left: 44px; }
.tracegrid td:last-child { border-right-width: 1px; }
.t1 { width: 135px; } .t2 { width: 104px; } .t3 { width: 49px; } .t4 { width: 130px; }
.t5 { width: 76px; } .t6 { width: 46px; } .t7 { width: 50px; } .t8 { width: 292px; }

/* CAN IG */
.igwin { padding: 0 10px 8px 7px; }
.igwin .wintitle { gap: 5px; }
.igbody { flex: 1; display: flex; flex-direction: column; min-height: 0; border: 1px solid #ccc; border-width: 1px 2px 2px 1px; }
.dots { width: 3px; height: 16px; border-left: 2px dotted #bbb; }
.igtable { flex: 1 1 0px; min-height: 0; border-top: 1px solid #888; background: #fff; }
.grid { width: 100%; }
.grid th, .grid td { height: 27px; padding: 0 5px; border-right: 1px solid #e6e6e6; white-space: nowrap; overflow: hidden; }
.grid th { height: 25px; }
.grid td { border-bottom: 1px solid #e6e6e6; }
.grid select { width: 100%; height: 24px; color: inherit; }
.frames em { float: right; color: #999; font-size: 12px; padding-right: 3px; }
.frames td:first-child { text-align: right; padding-right: 3px; }
.frames td:nth-child(2) { padding: 0 2px 0 3px; }
.frames td:nth-child(4) svg { display: inline-block; vertical-align: middle; margin-right: 3px; }
.frames td:nth-child(3), .signals td:nth-child(3) { padding-left: 4px; }
.a1 { width: 53px; } .a2 { width: 166px; } .a3 { width: 265px; }
.frames .on td:first-child, .frames .on td:last-child { background: #2c6ad2; color: #cfe0fa; }
.send { display: grid; place-items: center; width: 100%; height: 21px; background: #e1dfe1; border: 1px solid #aaa; }
.send.focus { border: 2px solid #2566ae; height: 24px; box-shadow: inset 0 0 0 1px #bcdcf7; }
.play { border: 5px solid transparent; border-left: 6px solid #c08070; border-right: 0; }
.stop { width: 9px; height: 9px; background: #d97a50; border: 1px solid #b65a38; }
.splitter { height: 11px; flex: none; background: linear-gradient(#8f8f8f, #bcbcbc 50%, #868686); display: flex; align-items: center; gap: 8px; padding-left: 517px; }
.tri { border: 4px solid transparent; border-top: 5px solid #111; border-bottom: 0; }
.sdots { width: 38px; border-top: 2px dotted #222; }
.tabstrip { display: flex; height: 25px; flex: none; background: #efefef; font-size: 15px; }
.tabstrip button { width: 72px; border: 1px solid #ddd; border-top: 0; white-space: nowrap; padding-top: 3px; }
.tabstrip .on { width: 64px; background: #fff; border: 0; padding: 0; }
.sigpanel { flex: none; height: 195px; margin: 7px 7px 8px; border: 1px solid #888; background: #fff; }
.b1 { width: 125px; } .b2 { width: 142px; } .b3 { width: 135px; } .b4 { width: 109px; } .b5 { width: 102px; }
.signals td { border-bottom: 0; }
.signals .alt { background: #efefef; }
.signals td:nth-child(2) { padding: 0 1px 0 3px; }
.signals td:nth-child(4) { padding-right: 1px; }
.ctl { display: grid; grid-template-columns: 1fr 1fr 1fr; gap: 2px; }
.ctl button { height: 22px; border: 1px solid #aaa; background: #e3e1e3; display: grid; place-items: center; }
.ctl.off button { background: #c9c9c9; filter: grayscale(1); }
.ctl.off svg { opacity: .5; }
.spin { display: flex; align-items: center; gap: 1px; }
.spin span { flex: 1; }
.spin button { width: 21px; height: 22px; background: #efefef; display: grid; place-items: center; }
.spin svg { width: 9px; height: 9px; }

/* graphics */
.graphwin { margin-bottom: 46px; padding: 0 8px 8px 8px; }
.graphwin .winctl { padding-right: 19px; gap: 24px; }
.toolbar.right { padding-left: 281px; }
.graphbody { flex: 1; display: grid; grid-template-columns: 212px 1fr; grid-template-rows: minmax(0, 1fr); min-height: 0; }
.legend { display: flex; flex-direction: column; justify-content: flex-end; padding: 0 0 1px 31px; background: linear-gradient(90deg, #f2f2f2 202px, #9a9a9a 205px, #6c6c6c 212px); }
.legend hr { width: 110px; height: 2px; background: #bbb; border: 0; margin: 0 0 6px; }
.plot { display: flex; flex-direction: column; min-width: 0; min-height: 0; background: #fff; }
.plot svg { width: 100%; flex: 1 1 0px; min-height: 0; }
.ticks { font-size: 14px; fill: #222; }
.markerbar { height: 22px; flex: none; background: #e3e3e3; border-top: 1px solid #ccc; padding: 4px 6px 0; color: #999; overflow: hidden; }

/* footer */
footer { background: #fdfdfd; border-top: 1px solid #bbb; flex: none; }
.writerow { height: 29px; border-bottom: 1px solid #ddd; display: flex; align-items: flex-end; }
.writerow button { display: flex; align-items: center; gap: 6px; height: 26px; padding: 0 6px 2px 2px; border: 1px solid #ddd; border-left: 0; border-bottom: 0; border-radius: 0 4px 0 0; color: #3d74a8; font-size: 15px; }
.writerow svg { width: 18px; height: 18px; }
.desktops { height: 24px; display: flex; border-bottom: 1px solid #aaa; font-size: 15px; padding-left: 13px; }
.desktops button { position: relative; height: 21px; padding: 0 4px 0 14px; margin-right: 5px; border-right: 1px solid #ccc; border-bottom: 1px solid #ccc; border-radius: 0 0 4px 0; }
.desktops button::before { content: ""; position: absolute; left: -6px; top: 0; height: 21px; border-left: 1px solid #ccc; transform: skewX(30deg); }
.desktops .on { color: #3d74a8; padding-right: 0; }
.desktops .on + button { padding-left: 12px; }
.desktops .add { padding-left: 6px; margin-left: -2px; }
.desktops svg { width: 19px; height: 19px; }
.scrollers { margin-left: auto; padding-right: 4px; color: #222; font-size: 14px; }
.status { height: 27px; display: flex; align-items: center; padding-right: 20px; }
.status input { width: 129px; height: 20px; border: 1px solid #aaa; border-left: 0; background: #fff; margin-top: 4px; }
.status svg { width: 22px; height: 22px; margin: 0 2px; }
.status .ssep { width: 1px; height: 27px; background: #aaa; margin: 0 6px; }
.status .capl { margin-left: 57px; margin-right: 2px; height: 20px; }
.clock { margin-left: auto; border-left: 1px solid #aaa; padding: 6px 8px 0 11px; font-size: 16px; color: #444; }

/* overlays */
.mark-frame { position: absolute; left: 198px; top: 776px; width: 169px; height: 184px; border: 39px solid #e8464a; }
.brand { position: absolute; right: 32px; top: 32px; font: italic 900 60px/70px Lato, sans-serif; color: #ececec; opacity: .8; }
.credit { position: absolute; right: 16px; bottom: 6px; font: 17px/24px "Liberation Sans", "Noto Sans CJK SC", sans-serif; color: #8a8a8a; }

/* dialog */
.dialog { position: absolute; left: 646px; top: 176px; width: 781px; background: #efefef; border: 1px solid #3c78ae; border-bottom-width: 2px; box-shadow: 0 4px 16px rgba(0, 0, 0, .4); }
.dlgtitle { display: flex; align-items: center; gap: 5px; height: 40px; background: #fff; padding: 0 16px 0 10px; }
.dlgtitle h2 { font: 17px/24px var(--wide); }
.dlgtitle button { margin-left: auto; }
.dlgtitle button svg { width: 14px; height: 14px; }
.dlgbody { display: grid; grid-template-columns: 374px 362px; justify-content: space-between; padding: 11px 13px 15px 10px; }
fieldset { margin: 0; padding: 0 0 0 10px; border: 1px solid #dcdcdc; min-width: 0; }
legend { padding: 0 3px; margin-left: -4px; height: 18px; line-height: 18px; }
.dialog input:not([type]) { height: 26px; border: 1px solid #777; border-radius: 0; background: #fff; padding: 0 4px; outline: 0; min-width: 0; }
.dialog input[readonly] { background: #efefef; }
.info { height: 146px; }
.sig { display: grid; grid-template-columns: 62px 285px; align-items: center; padding-top: 8px; }
.minmax { display: grid; grid-template-columns: 62px 96px 92px 96px; grid-auto-rows: 26px; row-gap: 11px; align-items: center; padding-top: 21px; white-space: nowrap; }
.second { padding-left: 24px; }
.settings { height: 129px; margin-top: 12px; }
.settings label { display: flex; align-items: center; gap: 3px; height: 30px; }
.settings legend + label { margin-top: 4px; }
.settings input { appearance: none; width: 17px; height: 17px; border: 1px solid #444; background: #fff url("data:image/svg+xml,%3Csvg xmlns='http://www.w3.org/2000/svg' width='15' height='15'%3E%3Cpath d='M2 8l4 4 7-9' fill='none' stroke='%23222' stroke-width='1.5'/%3E%3C/svg%3E") center no-repeat; }
.values { height: 340px; margin-top: 7px; }
.valbox { width: 352px; height: 299px; margin-top: 11px; border: 1px solid #888; background: #fff; display: grid; grid-template-columns: 322px 1fr; overflow: hidden; grid-template-rows: 297px; }
.valbox table { width: 322px; height: 308px; }
.valbox th { height: 26px; padding: 3px 0 0 7px; }
.valbox th i { display: inline-block; width: 8px; height: 8px; margin-right: 13px; vertical-align: 2px; }
.red { background: #b43c33; } .green { background: #2f6a2f; }
.valbox td { padding: 0 0 0 8px; line-height: 16px; border-bottom: 1px solid #f0f0f0; }
.valbox td:nth-child(2) { background: #dedde1; }
.valbox .vsb { width: 22px; justify-self: center; padding: 5px 0; }
.valbox .vsb i { height: 22px; margin: 6px 0 auto; }
.gen-set { height: 287px; }
.gen-set div { display: grid; grid-template-columns: 126px 151px auto; align-items: center; height: 26px; margin-bottom: 11px; }
.gen-set legend + div { margin-top: 8px; }
.gen-set span { padding-left: 6px; }
.dialog .gen-set .hot { border-color: #222; }
.graphic { height: 340px; margin-top: 7px; padding-left: 13px; }
.graphic legend { margin-left: -7px; }
.chart { width: 334px; height: 306px; margin-top: 3px; background: #fff; border: 1px solid #777; }
.chart text { font-size: 14px; fill: #222; }
.actions { display: grid; grid-template-columns: repeat(3, 93px); gap: 9px; justify-content: end; margin-top: 17px; }
.actions button { height: 29px; background: #e3e1e3; border: 1px solid #aaa; }
.actions .ok { border: 2px solid #3f6f9c; box-shadow: inset 0 0 0 1px #bfe0fa; }
.ibeam { position: absolute; left: 656px; top: 119px; width: 10px; height: 18px; }
```
